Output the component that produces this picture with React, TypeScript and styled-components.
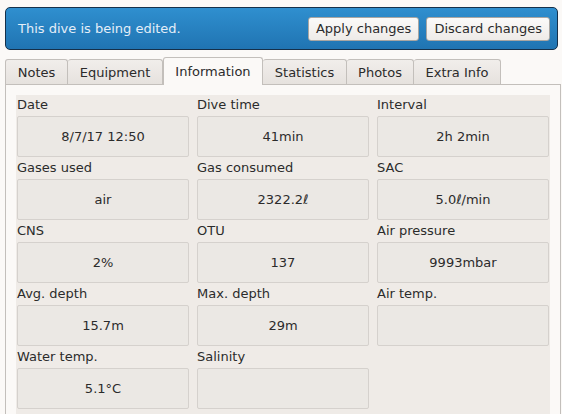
import React, { useState } from 'react';
import styled, { createGlobalStyle } from 'styled-components';

const GlobalStyle = createGlobalStyle`
  html, body {
    margin: 0;
    padding: 0;
    background: #fbf9f7;
    font-family: "DejaVu Sans", "Liberation Sans", sans-serif;
    font-size: 13px;
    color: #2b2b2b;
  }
`;

const Page = styled.div`
  display: flex;
  flex-direction: column;
  width: 562px;
  height: 414px;
  padding: 7px 1px 0 5px;
  box-sizing: border-box;
  overflow: hidden;
`;

const Banner = styled.div`
  display: flex;
  align-items: center;
  justify-content: space-between;
  height: 43px;
  width: 553px;
  box-sizing: border-box;
  padding: 0 7px 0 12px;
  border: 1px solid #15304a;
  border-radius: 5px;
  background: linear-gradient(#2f8fcf, #2074b2);
  color: #e4eef8;
`;

const ButtonRow = styled.div`
  display: flex;
  gap: 7px;
`;

const Button = styled.button`
  height: 24px;
  padding: 0 7px;
  border: 1px solid #a9a6a2;
  border-radius: 3px;
  background: linear-gradient(#fbfaf9, #eeebe8);
  color: #2b2b2b;
  font-family: inherit;
  font-size: 13px;
`;

const TabBar = styled.div`
  display: flex;
  align-items: flex-end;
  margin-top: 7px;
  height: 27px;
`;

const Tab = styled.div<{ $active: boolean; $width: number }>`
  display: flex;
  align-items: center;
  justify-content: center;
  box-sizing: border-box;
  width: ${(p) => p.$width}px;
  height: ${(p) => (p.$active ? '28px' : '25px')};
  margin-bottom: ${(p) => (p.$active ? '-1px' : '0')};
  padding-top: ${(p) => (p.$active ? '0' : '1px')};
  border: 1px solid #c3bfbb;
  border-bottom: none;
  border-left: ${(p) => (p.$active ? '1px solid #c3bfbb' : 'none')};
  border-radius: 3px 3px 0 0;
  background: ${(p) => (p.$active ? '#fbf9f7' : 'linear-gradient(#f1eeeb, #e6e2de)')};
  position: relative;
  z-index: ${(p) => (p.$active ? 1 : 0)};
  cursor: pointer;
  &:first-child {
    border-left: 1px solid #c3bfbb;
  }
`;

const Pane = styled.div`
  flex: 1;
  border: 1px solid #c3bfbb;
  border-bottom: none;
  padding: 10px 10px 0 10px;
  background: #fbf9f7;
`;

const Content = styled.div`
  display: grid;
  grid-template-columns: repeat(3, 1fr);
  grid-auto-rows: max-content;
  column-gap: 8px;
  row-gap: 1px;
  padding: 0 1px;
  height: 100%;
  background: #efebe7;
`;

const Field = styled.div`
  display: flex;
  flex-direction: column;
`;

const Label = styled.div`
  height: 21px;
  line-height: 19px;
`;

const ValueBox = styled.div`
  display: flex;
  align-items: center;
  justify-content: center;
  height: 41px;
  box-sizing: border-box;
  border: 1px solid #d5d1cd;
  border-radius: 2px;
  background: #ebe8e4;
`;

const tabs: [string, number][] = [
  ['Notes', 63],
  ['Equipment', 95],
  ['Information', 100],
  ['Statistics', 84],
  ['Photos', 67],
  ['Extra Info', 87],
];

const fields: [string, string][] = [
  ['Date', '8/7/17 12:50'],
  ['Dive time', '41min'],
  ['Interval', '2h 2min'],
  ['Gases used', 'air'],
  ['Gas consumed', '2322.2ℓ'],
  ['SAC', '5.0ℓ/min'],
  ['CNS', '2%'],
  ['OTU', '137'],
  ['Air pressure', '9993mbar'],
  ['Avg. depth', '15.7m'],
  ['Max. depth', '29m'],
  ['Air temp.', ''],
  ['Water temp.', '5.1°C'],
  ['Salinity', ''],
];

function App() {
  const [active, setActive] = useState('Information');

  return (
    <>
      <GlobalStyle />
      <Page>
        <Banner>
          <span>This dive is being edited.</span>
          <ButtonRow>
            <Button>Apply changes</Button>
            <Button>Discard changes</Button>
          </ButtonRow>
        </Banner>
        <TabBar>
          {tabs.map(([t, w]) => (
            <Tab key={t} $active={t === active} $width={w} onClick={() => setActive(t)}>
              {t}
            </Tab>
          ))}
        </TabBar>
        <Pane>
          <Content>
            {fields.map(([label, value]) => (
              <Field key={label}>
                <Label>{label}</Label>
                <ValueBox>{value}</ValueBox>
              </Field>
            ))}
          </Content>
        </Pane>
      </Page>
    </>
  );
}

export default App;
